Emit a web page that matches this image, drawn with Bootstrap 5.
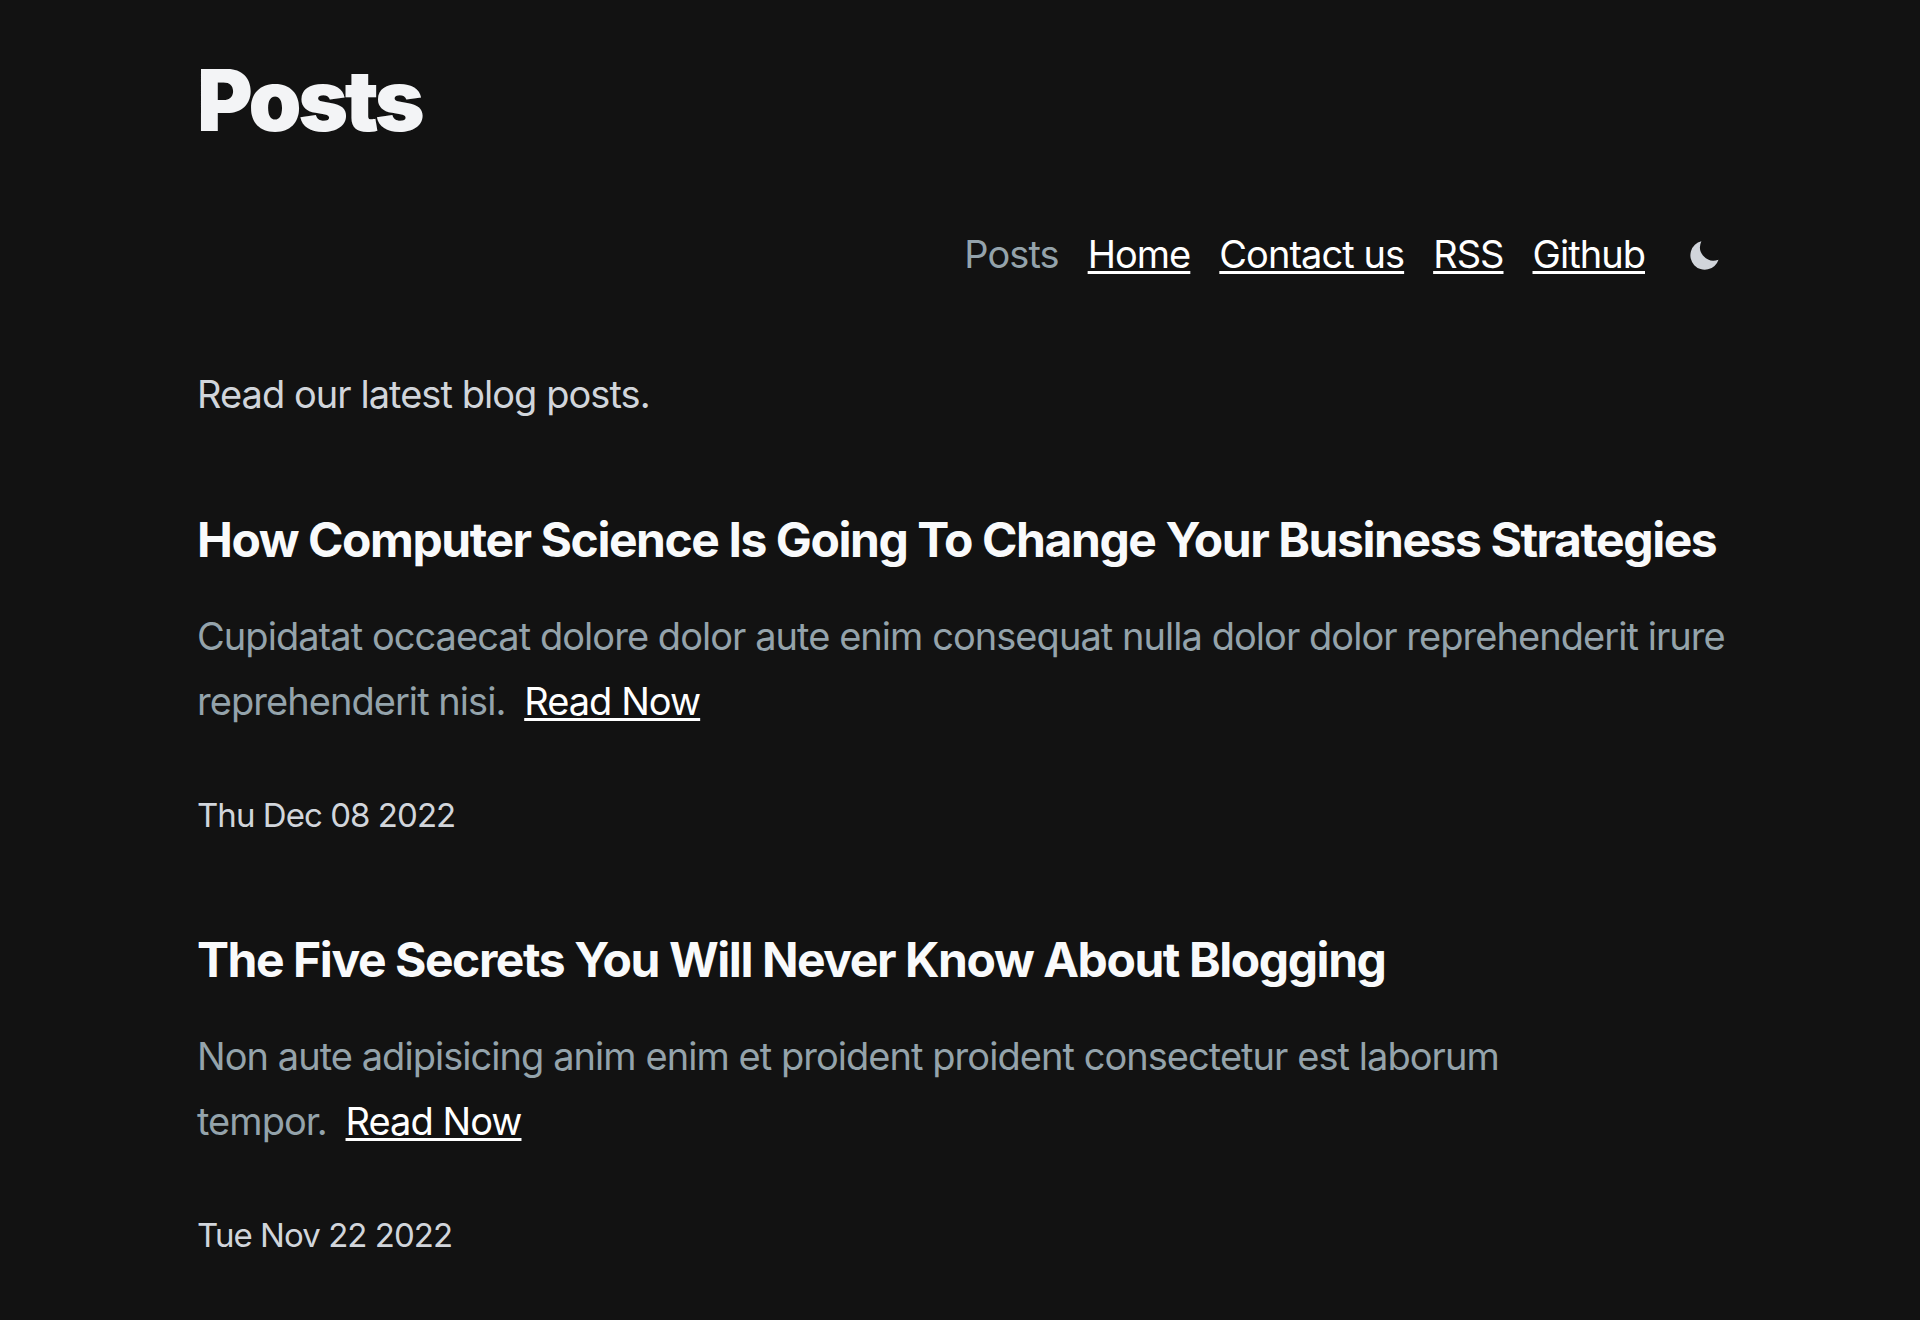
<!DOCTYPE html>
<html lang="en">
<head>
<meta charset="utf-8">
<meta name="viewport" content="width=device-width, initial-scale=1">
<title>Posts</title>
<link href="https://cdn.jsdelivr.net/npm/bootstrap@5.3.0/dist/css/bootstrap.min.css" rel="stylesheet">
<style>
body { background: #121212; color: #d1d5db; font-family: Inter, sans-serif; font-size: 38px; line-height: 65px; letter-spacing: -0.025em; }
.page { max-width: 1590px; padding: 55px 28px 8px 32px; }
.page-title { font-size: 85px; line-height: 92px; font-weight: 900; letter-spacing: -0.04em; color: #f3f4f6; margin: 0 0 75px; }
.site-nav { gap: 29px; margin-bottom: 75px; }
.site-nav a, .read-link { color: #fff; text-decoration: underline; text-decoration-thickness: 3px; text-underline-offset: 3px; text-decoration-skip-ink: none; }
.site-nav .current { color: #94a3ab; text-decoration: none; }
.theme-toggle { background: none; border: 0; padding: 0 4px 0 13px; color: #d1d5db; }
.theme-toggle svg { display: block; width: 36px; height: 36px; }
.intro { margin: 0 0 73px; }
.post { margin-bottom: 72px; }
.post-title { font-size: 48px; line-height: 80px; font-weight: 700; letter-spacing: -0.03em; color: #f9fafb; margin: 0 0 24px; }
.post-text { color: #94a3ab; margin: 0 0 49px; }
.read-link { margin-left: 9px; }
.post-date { display: block; font-size: 33px; }
</style>
<script src="https://cdn.jsdelivr.net/npm/bootstrap@5.3.0/dist/js/bootstrap.bundle.min.js" defer></script>
</head>
<body>
<div class="container-fluid page">
  <header>
    <h1 class="page-title">Posts</h1>
    <nav class="site-nav d-flex justify-content-end align-items-center flex-wrap" aria-label="Main">
      <a class="current" href="#posts" aria-current="page">Posts</a>
      <a href="#home">Home</a>
      <a href="#contact">Contact us</a>
      <a href="#rss">RSS</a>
      <a href="#github">Github</a>
      <button class="theme-toggle" type="button" aria-label="Toggle theme"><svg viewBox="0 0 20 20" fill="currentColor" aria-hidden="true"><path d="M17.5 12.6A7.5 7.5 0 0 1 8 2.4A8 8 0 1 0 17.5 12.6z"/></svg></button>
    </nav>
  </header>
  <main id="posts">
    <p class="intro">Read our latest blog posts.</p>
    <article class="post">
      <h2 class="post-title">How Computer Science Is Going To Change Your Business Strategies</h2>
      <p class="post-text">Cupidatat occaecat dolore dolor aute enim consequat nulla dolor dolor reprehenderit irure reprehenderit nisi.&nbsp;<a class="read-link" href="#post-1">Read Now</a></p>
      <time class="post-date" datetime="2022-12-08">Thu Dec 08 2022</time>
    </article>
    <article class="post">
      <h2 class="post-title">The Five Secrets You Will Never Know About Blogging</h2>
      <p class="post-text">Non aute adipisicing anim enim et proident proident consectetur est laborum tempor.&nbsp;<a class="read-link" href="#post-2">Read Now</a></p>
      <time class="post-date" datetime="2022-11-22">Tue Nov 22 2022</time>
    </article>
  </main>
</div>
</body>
</html>
